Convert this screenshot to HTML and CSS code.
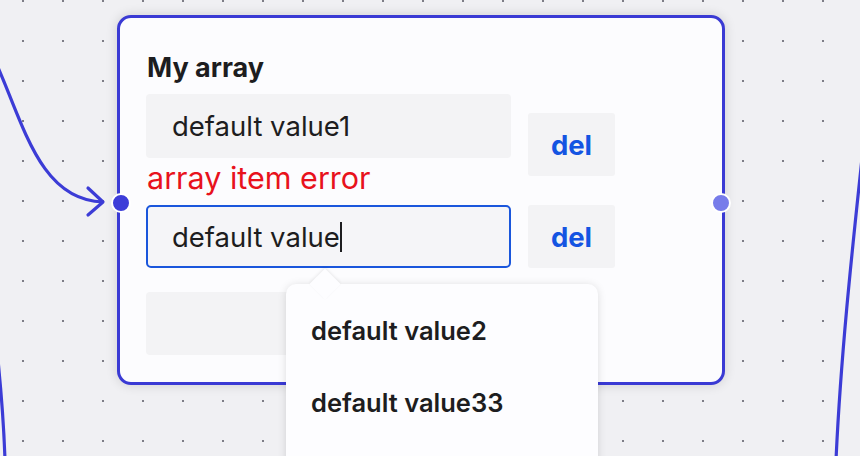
FILE: index.html
```html
<!DOCTYPE html>
<html>
<head>
<meta charset="utf-8">
<link rel="stylesheet" href="styles.css">
</head>
<body>
<div class="canvas">
  <svg class="edges" width="860" height="456" viewBox="0 0 860 456">
    <path d="M -20 30 C 20 100, 30 200, 103 202" fill="none" stroke="#3c3cd6" stroke-width="3.2"/>
    <polyline points="88,188 103,202 88,215" fill="none" stroke="#3c3cd6" stroke-width="3.2" stroke-linejoin="round" stroke-linecap="round"/>
    <path d="M -2 360 C 2 400, 4 430, 5 460" fill="none" stroke="#3c3cd6" stroke-width="3.2"/>
    <path d="M 866 120 C 858 200, 842 330, 836 460" fill="none" stroke="#3c3cd6" stroke-width="3.2"/>
  </svg>

  <div class="node">
    <span class="handle handle-in"></span>
    <span class="handle handle-out"></span>
    <div class="title">My array</div>
    <div class="items">
      <div class="item item-first">
        <div class="field">default value1</div>
        <div class="del del-offset">del</div>
      </div>
      <div class="item-group">
        <div class="error">array item error</div>
        <div class="item">
          <div class="field field-focus">default value<span class="caret"></span></div>
          <div class="del">del</div>
        </div>
      </div>
      <div class="item">
        <div class="field"></div>
      </div>
    </div>
  </div>

  <div class="dropdown">
    <span class="dropdown-arrow"></span>
    <div class="option">default value2</div>
    <div class="option">default value33</div>
  </div>
</div>
</body>
</html>
```
FILE: styles.css
```css
html, body {
  margin: 0;
  padding: 0;
}
body {
  width: 860px;
  height: 456px;
  overflow: hidden;
  font-family: Inter, "Noto Sans", sans-serif;
  color: #1d1d20;
}
.canvas {
  position: relative;
  width: 860px;
  height: 456px;
  background-color: #f0f0f3;
  background-image: radial-gradient(circle at 1px 1px, #7d7d86 1.1px, transparent 1.3px);
  background-size: 40px 40px;
  background-position: 22px 0;
  overflow: hidden;
}
.edges {
  position: absolute;
  left: 0;
  top: 0;
}
.node {
  position: absolute;
  left: 117px;
  top: 15px;
  width: 608px;
  height: 370px;
  box-sizing: border-box;
  border: 3px solid #3a3ad4;
  border-radius: 14px;
  background: #fcfcfe;
  box-shadow: 0 0 12px rgba(0, 0, 0, 0.14);
  padding: 34px 0 0 26px;
}
.handle {
  position: absolute;
  top: 175px;
  width: 16px;
  height: 16px;
  border-radius: 50%;
  border: 2px solid #ffffff;
}
.handle-in {
  left: -9px;
  background: #3d3dd8;
}
.handle-out {
  right: -9px;
  background: #777cea;
}
.title {
  font-size: 27px;
  line-height: 32px;
  font-weight: 700;
  padding-left: 1px;
}
.items {
  margin-top: 10px;
  display: flex;
  flex-direction: column;
}
.item {
  display: flex;
  align-items: flex-start;
  gap: 17px;
}
.item-first {
  height: 64px;
}
.item-group {
  margin-top: 2px;
}
.item-group .item {
  margin-top: 9px;
}
.item-group + .item {
  margin-top: 24px;
}
.field {
  width: 365px;
  height: 63px;
  box-sizing: border-box;
  background: #f3f3f5;
  border-radius: 4px;
  padding-left: 26px;
  display: flex;
  align-items: center;
  font-size: 27.5px;
  color: #1d1d20;
}
.item-first .field {
  height: 64px;
}
.field-focus {
  border: 2px solid #1a56dc;
  border-radius: 5px;
  padding-left: 24px;
  background: #f5f5f8;
}
.caret {
  display: inline-block;
  width: 2px;
  height: 30px;
  background: #1d1d20;
  margin-left: 0;
}
.del {
  width: 87px;
  height: 63px;
  background: #f3f3f5;
  border-radius: 3px;
  display: flex;
  align-items: center;
  justify-content: center;
  font-size: 27.5px;
  font-weight: 700;
  color: #1454e2;
}
.del-offset {
  margin-top: 19px;
}
.error {
  font-size: 30.5px;
  line-height: 36px;
  color: #e8121c;
  padding-left: 1px;
}
.dropdown {
  position: absolute;
  left: 286px;
  top: 284px;
  width: 312px;
  height: 220px;
  background: #fdfdff;
  border-radius: 10px;
  box-shadow: 0 1px 8px rgba(0, 0, 0, 0.13);
  padding-top: 10px;
  box-sizing: border-box;
}
.dropdown-arrow {
  position: absolute;
  left: 28px;
  top: -11px;
  width: 22px;
  height: 22px;
  background: #fdfdff;
  transform: rotate(45deg);
  box-shadow: -1px -1px 3px rgba(0, 0, 0, 0.07);
}
.option {
  position: relative;
  height: 72px;
  display: flex;
  align-items: center;
  padding-left: 25px;
  font-size: 25.5px;
  font-weight: 600;
  color: #1d1d20;
}
```
